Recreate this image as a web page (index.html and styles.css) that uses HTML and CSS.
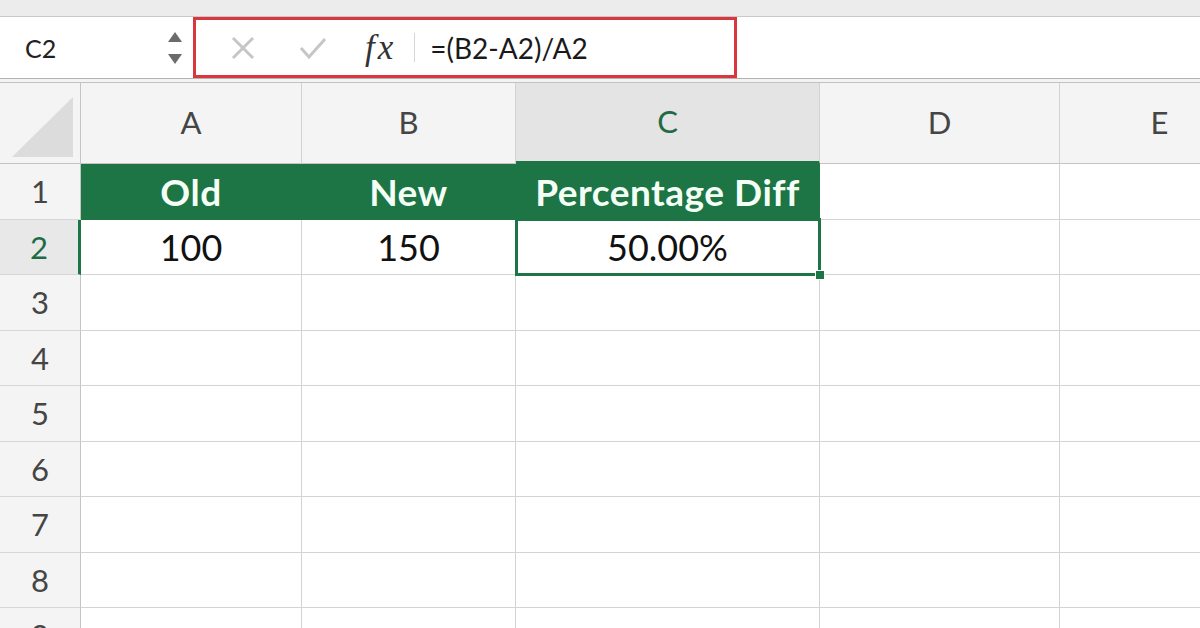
FILE: index.html
```html
<!DOCTYPE html>
<html lang="en">
<head>
    <meta charset="UTF-8">
    <title>Percentage Diff</title>
    <link rel="stylesheet" href="styles.css">
</head>
<body>

<!-- Window strip -->
<div class="top-strip"></div>

<!-- Formula bar -->
<div class="formula-bar">
    <div class="name-box">
        <span class="cell-ref">C2</span>
        <div class="spin">
            <svg width="14" height="10" viewBox="0 0 14 10"><polygon points="7,0 14,10 0,10" fill="#6b6b6b"/></svg>
            <svg width="14" height="10" viewBox="0 0 14 10"><polygon points="0,0 14,0 7,10" fill="#6b6b6b"/></svg>
        </div>
    </div>
    <div class="formula-box">
        <svg class="fb-icon" width="30" height="30" viewBox="0 0 30 30">
            <path d="M5 5 L25 25 M25 5 L5 25" stroke="#c6c6c6" stroke-width="3" fill="none"/>
        </svg>
        <svg class="fb-icon check" width="30" height="30" viewBox="0 0 30 30">
            <path d="M3 15 L11 24 L27 6" stroke="#c6c6c6" stroke-width="3" fill="none"/>
        </svg>
        <span class="fx">fx</span>
        <span class="divider"></span>
        <span class="formula">=(B2-A2)/A2</span>
    </div>
</div>
<div class="bar-gap"></div>

<!-- Worksheet -->
<div class="sheet">
    <div class="corner">
        <svg width="61" height="60" viewBox="0 0 61 60"><polygon points="61,0 61,60 0,60" fill="#dcdcdc"/></svg>
    </div>
    <div class="col-head">A</div>
    <div class="col-head">B</div>
    <div class="col-head active">C</div>
    <div class="col-head">D</div>
    <div class="col-head">E</div>

    <div class="row-head">1</div>
    <div class="cell title">Old</div>
    <div class="cell title">New</div>
    <div class="cell title">Percentage Diff</div>
    <div class="cell"></div>
    <div class="cell"></div>

    <div class="row-head active">2</div>
    <div class="cell">100</div>
    <div class="cell">150</div>
    <div class="cell selected">50.00%<span class="handle"></span></div>
    <div class="cell"></div>
    <div class="cell"></div>

    <div class="row-head">3</div>
    <div class="cell"></div><div class="cell"></div><div class="cell"></div><div class="cell"></div><div class="cell"></div>

    <div class="row-head">4</div>
    <div class="cell"></div><div class="cell"></div><div class="cell"></div><div class="cell"></div><div class="cell"></div>

    <div class="row-head">5</div>
    <div class="cell"></div><div class="cell"></div><div class="cell"></div><div class="cell"></div><div class="cell"></div>

    <div class="row-head">6</div>
    <div class="cell"></div><div class="cell"></div><div class="cell"></div><div class="cell"></div><div class="cell"></div>

    <div class="row-head">7</div>
    <div class="cell"></div><div class="cell"></div><div class="cell"></div><div class="cell"></div><div class="cell"></div>

    <div class="row-head">8</div>
    <div class="cell"></div><div class="cell"></div><div class="cell"></div><div class="cell"></div><div class="cell"></div>

    <div class="row-head">9</div>
    <div class="cell"></div><div class="cell"></div><div class="cell"></div><div class="cell"></div><div class="cell"></div>
</div>

</body>
</html>
```

FILE: styles.css
```css
/* General Styling */
* {
    box-sizing: border-box;
}

body {
    margin: 0;
    width: 1200px;
    height: 628px;
    overflow: hidden;
    background: #ffffff;
    font-family: 'Lato', 'Liberation Sans', sans-serif;
}

.top-strip {
    height: 17px;
    background: #ececec;
    border-bottom: 1px solid #c9c9c9;
}

/* Formula bar */
.formula-bar {
    display: flex;
    height: 61px;
    background: #ffffff;
}

.name-box {
    width: 193px;
    display: flex;
    align-items: center;
    padding-left: 25px;
    padding-right: 11px;
}

.cell-ref {
    flex: 1;
    font-size: 25px;
    color: #222;
}

.spin {
    display: flex;
    flex-direction: column;
    gap: 12px;
}

.spin svg {
    display: block;
}

.formula-box {
    width: 544px;
    height: 61px;
    border: 3px solid #d9363e;
    display: flex;
    align-items: center;
    padding-left: 32px;
}

.fb-icon {
    display: block;
}

.check {
    margin-left: 40px;
}

.fx {
    margin-left: 37px;
    font-family: 'Liberation Serif', serif;
    font-style: italic;
    font-size: 35px;
    color: #333;
    letter-spacing: 3px;
}

.divider {
    width: 1px;
    height: 29px;
    background: #d6d6d6;
    margin-left: 18px;
}

.formula {
    margin-left: 15px;
    font-size: 28px;
    color: #1a1a1a;
}

.bar-gap {
    height: 5px;
    background: #f3f3f3;
    border-top: 1px solid #b2b2b2;
    border-bottom: 1px solid #c2c2c2;
}

/* Worksheet grid */
.sheet {
    display: grid;
    grid-template-columns: 81px 221px 214px 304px 240px 200px;
    grid-template-rows: 81px;
    grid-auto-rows: 55.5px;
    width: 1260px;
}

.corner,
.col-head,
.row-head {
    background: #f4f4f4;
    border-right: 1px solid #d2d2d2;
    border-bottom: 1px solid #c4c4c4;
    color: #454545;
    font-size: 31px;
    display: flex;
    align-items: center;
    justify-content: center;
}

.corner {
    align-items: flex-end;
    justify-content: flex-end;
    padding: 0 7px 6px 0;
    border-right-color: #c4c4c4;
}

.corner svg {
    display: block;
}

.col-head {
    padding-bottom: 2px;
}

.col-head.active {
    background: #e4e4e4;
    color: #1f6b45;
    border-bottom: 3px solid #1d7444;
}

.row-head {
    border-right-color: #c4c4c4;
    border-bottom-color: #d6d6d6;
}

.row-head.active {
    background: #e8e8e8;
    color: #1f6b45;
    border-right: 3px solid #1d7444;
}

.cell {
    border-right: 1px solid #d3d3d3;
    border-bottom: 1px solid #d3d3d3;
    font-size: 36px;
    color: #111;
    display: flex;
    align-items: center;
    justify-content: center;
}

.cell.title {
    background: #1d7444;
    border-color: #1d7444;
    color: #f4fff6;
    font-weight: bold;
    font-size: 37px;
    letter-spacing: 0.5px;
}

.cell.selected {
    position: relative;
}

.cell.selected::after {
    content: "";
    position: absolute;
    top: -2px;
    left: -1px;
    right: -2px;
    bottom: -2px;
    border: 3px solid #1d7444;
}

.handle {
    position: absolute;
    right: -6px;
    bottom: -6px;
    width: 10px;
    height: 10px;
    background: #1d7444;
    border: 1px solid #ffffff;
    z-index: 1;
}
```
